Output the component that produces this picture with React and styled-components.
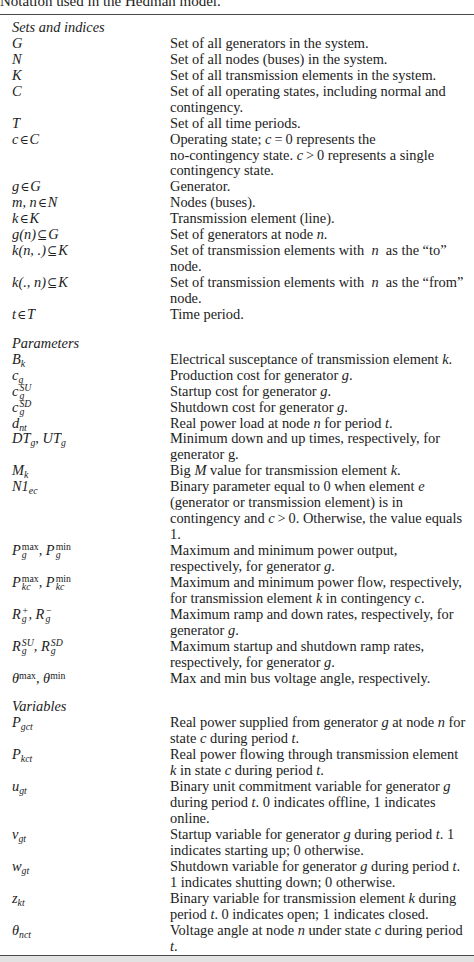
import React from 'react'
import styled, { createGlobalStyle } from 'styled-components'

const GlobalStyle = createGlobalStyle`
  html, body {
    margin: 0;
    padding: 0;
    background: #fff;
  }
  body {
    font-family: "Liberation Serif", "DejaVu Serif", serif;
    color: #222;
    font-size: 14.4px;
    line-height: 15.93px;
  }
`

const Page = styled.div`
  width: 474px;
  height: 962px;
  overflow: hidden;
  display: flex;
  flex-direction: column;
`

const Caption = styled.div`
  font-size: 15px;
  line-height: 16px;
  height: 16px;
  margin-top: -7px;
  white-space: nowrap;
`

const Table = styled.div`
  margin-top: 5px;
  border-top: 1px solid #4a4a4a;
  border-bottom: 1px solid #4a4a4a;
  padding: 5px 0 1px;
`

const Section = styled.div`
  & + & {
    margin-top: 13px;
  }
`

const Heading = styled.div`
  font-style: italic;
  padding-left: 12px;
`

const Row = styled.div`
  display: grid;
  grid-template-columns: 158px 1fr;
  padding-left: 12px;
`

const Symbol = styled.div`
  font-style: italic;
  white-space: nowrap;
  height: 15.93px;
`

const Line = styled.div`
  white-space: nowrap;
`

const Sub = styled.sub`
  font-size: 68%;
  line-height: 0;
  vertical-align: -0.3em;
`

const Sup = styled.sup`
  font-size: 68%;
  line-height: 0;
  vertical-align: 0.45em;
`

const Stack = styled.span`
  display: inline-flex;
  flex-direction: column;
  font-size: 68%;
  line-height: 8px;
  vertical-align: 5px;
  margin-left: 1px;
`

const Rel = styled.span`
  font-style: normal;
  font-size: 85%;
  margin: 0 1px;
`

const Up = styled.span`
  font-style: normal;
`

const Footer = styled.div`
  flex: 1;
  background: #e2e2e2;
`

const SupSub = ({ sup, sub }) =>
  <Stack>
    <span>{sup}</span>
    <span>{sub}</span>
  </Stack>

const sets = [
  [<>G</>, [`Set of all generators in the system.`]],
  [<>N</>, [`Set of all nodes (buses) in the system.`]],
  [<>K</>, [`Set of all transmission elements in the system.`]],
  [<>C</>, [`Set of all operating states, including normal and`, `contingency.`]],
  [<>T</>, [`Set of all time periods.`]],
  [<>c<Rel>∈</Rel>C</>, [
    <>Operating state; <i>c</i>&thinsp;=&thinsp;0 represents the</>,
    <>no-contingency state. <i>c</i>&thinsp;&gt;&thinsp;0 represents a single</>,
    `contingency state.`,
  ]],
  [<>g<Rel>∈</Rel>G</>, [`Generator.`]],
  [<>m, n<Rel>∈</Rel>N</>, [`Nodes (buses).`]],
  [<>k<Rel>∈</Rel>K</>, [`Transmission element (line).`]],
  [<>g(n)<Rel>⊆</Rel>G</>, [<>Set of generators at node <i>n</i>.</>]],
  [<>k(n, .)<Rel>⊆</Rel>K</>, [<>Set of transmission elements with &nbsp;<i>n</i>&nbsp; as the “to”</>, `node.`]],
  [<>k(., n)<Rel>⊆</Rel>K</>, [<>Set of transmission elements with &nbsp;<i>n</i>&nbsp; as the “from”</>, `node.`]],
  [<>t<Rel>∈</Rel>T</>, [`Time period.`]],
]

const params = [
  [<>B<Sub>k</Sub></>, [<>Electrical susceptance of transmission element <i>k</i>.</>]],
  [<>c<Sub>g</Sub></>, [<>Production cost for generator <i>g</i>.</>]],
  [<>c<SupSub sup="SU" sub="g" /></>, [<>Startup cost for generator <i>g</i>.</>]],
  [<>c<SupSub sup="SD" sub="g" /></>, [<>Shutdown cost for generator <i>g</i>.</>]],
  [<>d<Sub>nt</Sub></>, [<>Real power load at node <i>n</i> for period <i>t</i>.</>]],
  [<>DT<Sub>g</Sub>, UT<Sub>g</Sub></>, [`Minimum down and up times, respectively, for`, `generator g.`]],
  [<>M<Sub>k</Sub></>, [<>Big <i>M</i> value for transmission element <i>k</i>.</>]],
  [<>N1<Sub>ec</Sub></>, [
    <>Binary parameter equal to 0 when element <i>e</i></>,
    `(generator or transmission element) is in`,
    <>contingency and <i>c</i>&thinsp;&gt;&thinsp;0. Otherwise, the value equals</>,
    `1.`,
  ]],
  [<>P<SupSub sup={<Up>max</Up>} sub="g" />, P<SupSub sup={<Up>min</Up>} sub="g" /></>, [
    `Maximum and minimum power output,`,
    <>respectively, for generator <i>g</i>.</>,
  ]],
  [<>P<SupSub sup={<Up>max</Up>} sub="kc" />, P<SupSub sup={<Up>min</Up>} sub="kc" /></>, [
    `Maximum and minimum power flow, respectively,`,
    <>for transmission element <i>k</i> in contingency <i>c</i>.</>,
  ]],
  [<>R<SupSub sup="+" sub="g" />, R<SupSub sup="−" sub="g" /></>, [
    `Maximum ramp and down rates, respectively, for`,
    <>generator <i>g</i>.</>,
  ]],
  [<>R<SupSub sup="SU" sub="g" />, R<SupSub sup="SD" sub="g" /></>, [
    `Maximum startup and shutdown ramp rates,`,
    <>respectively, for generator <i>g</i>.</>,
  ]],
  [<>θ<Sup><Up>max</Up></Sup>, θ<Sup><Up>min</Up></Sup></>, [`Max and min bus voltage angle, respectively.`]],
]

const variables = [
  [<>P<Sub>gct</Sub></>, [
    <>Real power supplied from generator <i>g</i> at node <i>n</i> for</>,
    <>state <i>c</i> during period <i>t</i>.</>,
  ]],
  [<>P<Sub>kct</Sub></>, [
    `Real power flowing through transmission element`,
    <><i>k</i> in state <i>c</i> during period <i>t</i>.</>,
  ]],
  [<>u<Sub>gt</Sub></>, [
    <>Binary unit commitment variable for generator <i>g</i></>,
    <>during period <i>t</i>. 0 indicates offline, 1 indicates</>,
    `online.`,
  ]],
  [<>v<Sub>gt</Sub></>, [
    <>Startup variable for generator <i>g</i> during period <i>t</i>. 1</>,
    `indicates starting up; 0 otherwise.`,
  ]],
  [<>w<Sub>gt</Sub></>, [
    <>Shutdown variable for generator <i>g</i> during period <i>t</i>.</>,
    `1 indicates shutting down; 0 otherwise.`,
  ]],
  [<>z<Sub>kt</Sub></>, [
    <>Binary variable for transmission element <i>k</i> during</>,
    <>period <i>t</i>. 0 indicates open; 1 indicates closed.</>,
  ]],
  [<>θ<Sub>nct</Sub></>, [
    <>Voltage angle at node <i>n</i> under state <i>c</i> during period</>,
    <><i>t</i>.</>,
  ]],
]

const sections = [
  { title: `Sets and indices`, rows: sets },
  { title: `Parameters`, rows: params },
  { title: `Variables`, rows: variables },
]

const NotationRow = ({ symbol, lines }) =>
  <Row>
    <Symbol>{symbol}</Symbol>
    <div>
      {lines.map((line, i) => <Line key={i}>{line}</Line>)}
    </div>
  </Row>

export default function App() {
  return (
    <Page>
      <GlobalStyle />
      <Caption>Notation used in the Hedman model.</Caption>
      <Table>
        {sections.map(section =>
          <Section key={section.title}>
            <Heading>{section.title}</Heading>
            {section.rows.map(([symbol, lines], i) =>
              <NotationRow key={i} symbol={symbol} lines={lines} />
            )}
          </Section>
        )}
      </Table>
      <Footer />
    </Page>
  )
}
